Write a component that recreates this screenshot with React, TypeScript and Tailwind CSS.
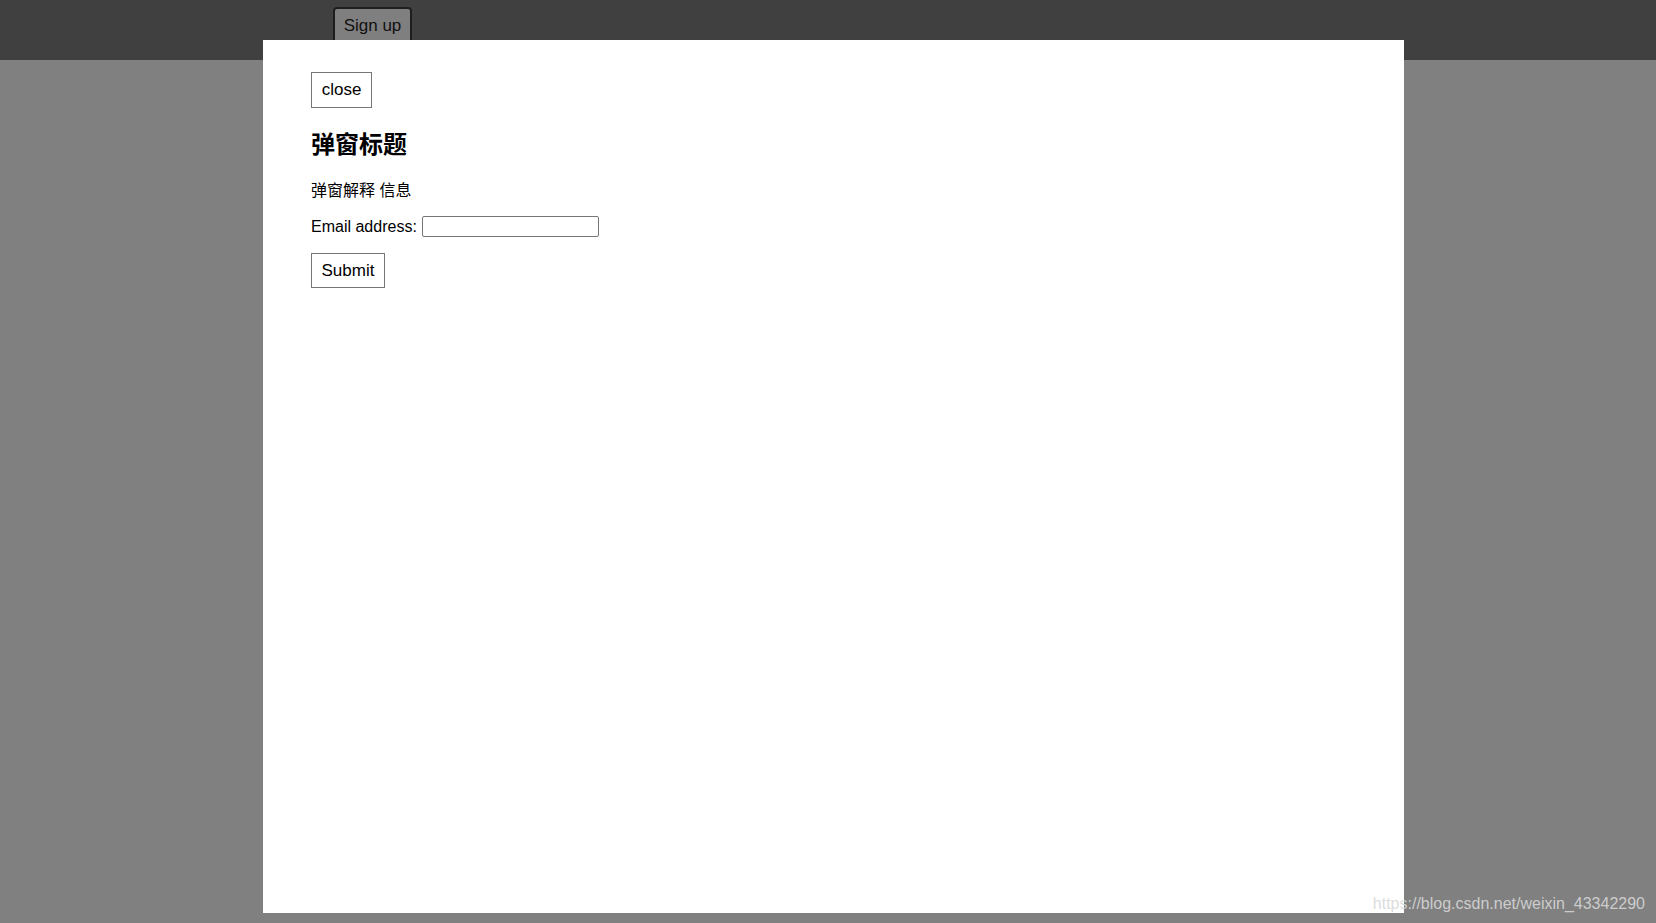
export default function App() {
  return (
    <div className="relative h-[923px] w-[1656px] overflow-hidden bg-[#808080] font-['Liberation_Sans','Noto_Sans_CJK_SC',sans-serif] text-black">
      {/* Top bar */}
      <div className="h-[60px] bg-[#404040] pl-[333px] pt-[7px]">
        <button className="h-[40px] w-[79px] rounded-[4px] border-2 border-[#1e1e1e] bg-[#7f7f7f] pb-[2px] text-[17px] text-[#111]">
          Sign up
        </button>
      </div>

      {/* Modal */}
      <div className="absolute left-[263px] top-[40px] flex h-[873px] w-[1141px] flex-col items-start bg-white pl-[48px] pt-[32px]">
        <button className="h-[36px] w-[61px] border border-[#767676] bg-white text-[17px]">
          close
        </button>
        <h2 className="mt-[24px] text-[24px] font-bold leading-[25px]">弹窗标题</h2>
        <p className="mt-[25px] text-[16px] leading-[17px]">弹窗解释 信息</p>
        <div className="mt-[17px] flex h-[21px] items-center gap-[5px] text-[16px]">
          <label>Email address:</label>
          <input className="h-[21px] w-[177px] rounded-[2px] border border-[#767676] px-1 text-[14px]" />
        </div>
        <button className="mt-[16px] h-[35px] w-[74px] border border-[#767676] bg-white text-[17px]">
          Submit
        </button>
      </div>

      {/* Watermark */}
      <div className="absolute right-[11px] top-[894px] text-[16px] leading-[20px] text-[rgba(215,215,215,0.9)]">
        https://blog.csdn.net/weixin_43342290
      </div>
    </div>
  );
}
